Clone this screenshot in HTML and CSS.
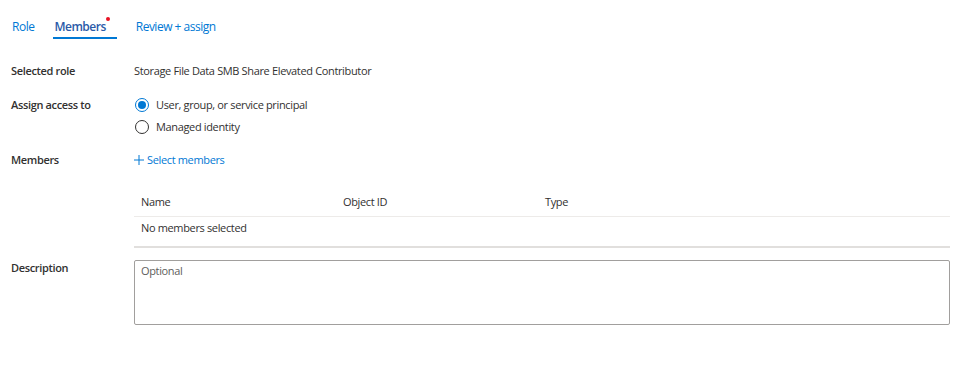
FILE: index.html
```html
<html lang="en">
<head>
    <meta charset="UTF-8">
    <meta name="viewport" content="width=device-width, initial-scale=1.0">
    <title>Add role assignment</title>

    <link rel="stylesheet" href="styles.css">
</head>
<body>

<nav class="tabs">
    <a class="tab">Role</a>
    <a class="tab active">Members<span class="dot"></span></a>
    <a class="tab">Review + assign</a>
</nav>

<div class="form">
    <div class="field">
        <div class="label">Selected role</div>
        <div class="value">Storage File Data SMB Share Elevated Contributor</div>
    </div>

    <div class="field radios-field">
        <div class="label">Assign access to</div>
        <div class="radios">
            <label class="radio checked"><span class="circle"></span>User, group, or service principal</label>
            <label class="radio"><span class="circle"></span>Managed identity</label>
        </div>
    </div>

    <div class="field members-field">
        <div class="label">Members</div>
        <div>
            <a class="add-link">
                <svg width="10" height="10" viewBox="0 0 10 10"><path d="M5 0v10M0 5h10" stroke="#0078d4" stroke-width="1" fill="none"/></svg>
                Select members
            </a>

            <table class="members-table">
                <thead>
                    <tr>
                        <th>Name</th>
                        <th>Object ID</th>
                        <th>Type</th>
                    </tr>
                </thead>
                <tbody>
                    <tr>
                        <td colspan="3">No members selected</td>
                    </tr>
                </tbody>
            </table>
        </div>
    </div>

    <div class="field desc-field">
        <div class="label">Description</div>
        <textarea placeholder="Optional"></textarea>
    </div>
</div>

</body>
</html>
```

FILE: styles.css
```css
* {
    margin: 0;
    padding: 0;
    box-sizing: border-box;
}

body {
    font-family: 'Open Sans', 'Noto Sans', sans-serif;
    font-size: 11px;
    letter-spacing: -0.35px;
    color: #323130;
    background-color: #fff;
}

/* onglets */
.tabs {
    display: flex;
    gap: 18px;
    padding: 19px 0 0 11px;
}

.tab {
    line-height: 16px;
    padding: 0 1px 2px 1px;
    border-bottom: 2px solid transparent;
    color: #0078d4;
    font-size: 12px;
    letter-spacing: -0.5px;
    position: relative;
}

.tab.active {
    color: #2a5aa8;
    font-weight: 600;
    border-bottom-color: #0078d4;
    padding-right: 11px;
}

.dot {
    position: absolute;
    top: -2px;
    right: 7px;
    width: 4px;
    height: 4px;
    border-radius: 50%;
    background-color: #e81123;
}

/* formulaire */
.form {
    padding: 24px 30px 0 11px;
}

.field {
    display: grid;
    grid-template-columns: 123px 1fr;
    line-height: 16px;
}

.label {
    font-weight: 600;
}

.radios-field {
    margin-top: 15px;
    line-height: 22px;
}

.radio {
    display: flex;
    align-items: center;
    gap: 7px;
    height: 22px;
}

.circle {
    width: 14px;
    height: 14px;
    border: 1px solid #323130;
    border-radius: 50%;
    margin-left: 1px;
    display: flex;
    align-items: center;
    justify-content: center;
}

.radio.checked .circle {
    border-color: #0078d4;
}

.radio.checked .circle::after {
    content: "";
    width: 8px;
    height: 8px;
    border-radius: 50%;
    background-color: #0078d4;
}

.members-field {
    margin-top: 14px;
}

.add-link {
    display: flex;
    align-items: center;
    gap: 3px;
    color: #0078d4;
}

.members-table {
    width: 100%;
    margin-top: 20px;
    border-collapse: collapse;
    font-size: inherit;
}

th {
    text-align: left;
    font-weight: 400;
    line-height: 28px;
    padding: 0 7px;
    border-bottom: 1px solid #edebe9;
    width: 202px;
}

th:last-child {
    width: auto;
}

td {
    line-height: 22px;
    padding: 0 7px 7px 7px;
    border-bottom: 2px solid #e1dfdd;
}

.desc-field {
    margin-top: 12px;
}

textarea {
    height: 65px;
    border: 1px solid #a19f9d;
    border-radius: 2px;
    padding: 2px 6px;
    font-family: inherit;
    font-size: 11px;
    letter-spacing: -0.35px;
    line-height: 16px;
    resize: none;
}

textarea::placeholder {
    color: #605e5c;
}
```
